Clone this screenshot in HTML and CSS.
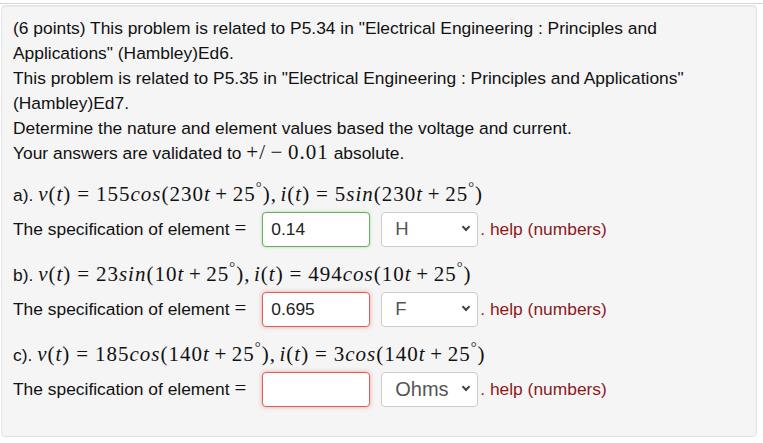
FILE: index.html
```html
<!DOCTYPE html>
<html lang="en">
<head>
    <meta charset="UTF-8">
    <meta name="viewport" content="width=device-width, initial-scale=1.0">
    <title>Problem 6</title>
    <link rel="stylesheet" href="styles.css">
</head>
<body>
    <div class="top-rule"></div>
    <div class="problem">
        <div class="intro">
            (6 points) This problem is related to P5.34 in "Electrical Engineering : Principles and Applications" (Hambley)Ed6.<br>
            This problem is related to P5.35 in "Electrical Engineering : Principles and Applications" (Hambley)Ed7.<br>
            Determine the nature and element values based the voltage and current.<br>
            Your answers are validated to <span class="math">+/<span class="bin">&minus;</span>0.01</span> absolute.
        </div>

        <!-- part a -->
        <div class="part">
            <div class="eq">a). <span class="math"><i>v</i>(<i>t</i>)<span class="rel">=</span>155<i>cos</i>(230<i>t</i><span class="bin">+</span>25<sup>&deg;</sup>),<span class="thin"></span><i>i</i>(<i>t</i>)<span class="rel">=</span>5<i>sin</i>(230<i>t</i><span class="bin">+</span>25<sup>&deg;</sup>)</span></div>
            <div class="answer">
                <span>The specification of element <span class="math">=</span></span>
                <input type="text" class="ans correct" value="0.14">
                <div class="unit"><span>H</span><span class="chev"></span></div>
                <span class="help">. help (numbers)</span>
            </div>
        </div>

        <!-- part b -->
        <div class="part">
            <div class="eq">b). <span class="math"><i>v</i>(<i>t</i>)<span class="rel">=</span>23<i>sin</i>(10<i>t</i><span class="bin">+</span>25<sup>&deg;</sup>),<span class="thin"></span><i>i</i>(<i>t</i>)<span class="rel">=</span>494<i>cos</i>(10<i>t</i><span class="bin">+</span>25<sup>&deg;</sup>)</span></div>
            <div class="answer">
                <span>The specification of element <span class="math">=</span></span>
                <input type="text" class="ans wrong" value="0.695">
                <div class="unit"><span>F</span><span class="chev"></span></div>
                <span class="help">. help (numbers)</span>
            </div>
        </div>

        <!-- part c -->
        <div class="part">
            <div class="eq">c). <span class="math"><i>v</i>(<i>t</i>)<span class="rel">=</span>185<i>cos</i>(140<i>t</i><span class="bin">+</span>25<sup>&deg;</sup>),<span class="thin"></span><i>i</i>(<i>t</i>)<span class="rel">=</span>3<i>cos</i>(140<i>t</i><span class="bin">+</span>25<sup>&deg;</sup>)</span></div>
            <div class="answer">
                <span>The specification of element <span class="math">=</span></span>
                <input type="text" class="ans wrong" value="">
                <div class="unit big"><span>Ohms</span><span class="chev"></span></div>
                <span class="help">. help (numbers)</span>
            </div>
        </div>
    </div>
</body>
</html>
```

FILE: styles.css
```css
* {
    margin: 0;
    padding: 0;
    box-sizing: border-box;
}

body {
    background: #ffffff;
    font-family: 'Liberation Sans', Arial, sans-serif;
    font-size: 17.4px;
    color: #111;
    padding-top: 3px;
}

.top-rule {
    border-top: 1px solid #d6d6d6;
    margin-bottom: 1px;
}

.problem {
    margin-left: 1px;
    width: 756px;
    background: #f5f5f5;
    border: 1px solid #e3e3e3;
    border-radius: 4px;
    box-shadow: inset 0 1px 1px rgba(0, 0, 0, 0.05);
    padding: 10px 11px 29px 11px;
}

.intro {
    line-height: 25px;
}

.math {
    font-family: 'Liberation Serif', 'Times New Roman', serif;
    font-size: 21px;
    letter-spacing: 1px;
    line-height: 1;
}

.math i {
    font-style: italic;
}

.math sup {
    font-size: 0.7em;
    vertical-align: 0.6em;
    line-height: 0;
}

.rel {
    margin: 0 0.28em;
}

.bin {
    margin: 0 0.22em;
}

.thin {
    margin-left: 0.17em;
}

.part {
    margin-top: 14px;
}

.part + .part {
    margin-top: 13px;
}

.eq {
    height: 30px;
    line-height: 30px;
}

.answer {
    display: flex;
    align-items: center;
    height: 36px;
    margin-top: 1px;
}

.ans {
    width: 108px;
    height: 35px;
    margin-left: 15px;
    padding: 0 8px;
    font-family: 'Liberation Sans', Arial, sans-serif;
    font-size: 17.4px;
    color: #222;
    background: #fff;
    border-radius: 4px;
    outline: none;
}

.ans.correct {
    border: 1px solid #6aad5e;
    box-shadow: 0 0 3px rgba(92, 184, 92, 0.45);
}

.ans.wrong {
    border: 1px solid #d9625f;
    box-shadow: 0 0 4px rgba(217, 83, 79, 0.5);
}

.unit {
    width: 97px;
    height: 35px;
    margin-left: 11px;
    padding: 0 8px 0 13px;
    display: flex;
    align-items: center;
    justify-content: space-between;
    background: #fff;
    border: 1px solid #ccc;
    border-radius: 4px;
    color: #555;
    font-size: 18.5px;
}

.unit.big {
    font-size: 20px;
}

.chev {
    width: 6px;
    height: 6px;
    border-right: 2px solid #444;
    border-bottom: 2px solid #444;
    transform: rotate(45deg);
    margin-top: -4px;
}

.help {
    color: #8b1a1a;
    margin-left: 2px;
}
```
